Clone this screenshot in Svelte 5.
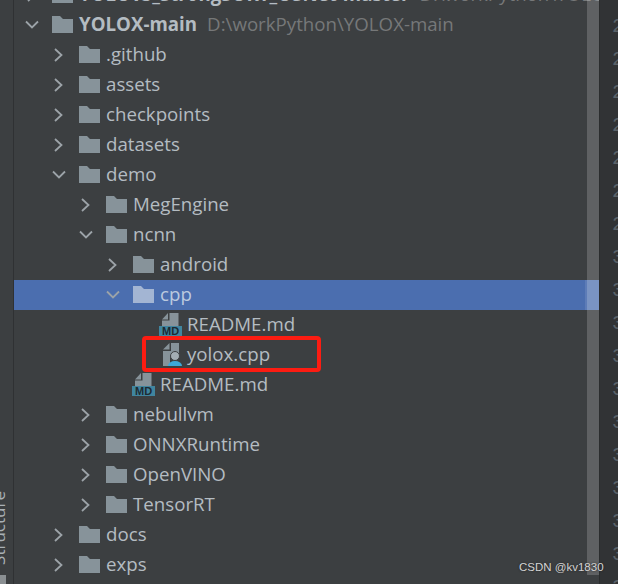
<script lang="ts">
  type Row = { name: string; depth: number; kind: 'closed' | 'open' | 'md' | 'cpp'; path?: string; bold?: boolean; selected?: boolean; boxed?: boolean };

  const rows: Row[] = [
    { name: 'YOLOv5_StrongSORT_OSNet-master', depth: 0, kind: 'closed', path: 'D:\\workPython\\YOLOv5', bold: true },
    { name: 'YOLOX-main', depth: 0, kind: 'open', path: 'D:\\workPython\\YOLOX-main', bold: true },
    { name: '.github', depth: 1, kind: 'closed' },
    { name: 'assets', depth: 1, kind: 'closed' },
    { name: 'checkpoints', depth: 1, kind: 'closed' },
    { name: 'datasets', depth: 1, kind: 'closed' },
    { name: 'demo', depth: 1, kind: 'open' },
    { name: 'MegEngine', depth: 2, kind: 'closed' },
    { name: 'ncnn', depth: 2, kind: 'open' },
    { name: 'android', depth: 3, kind: 'closed' },
    { name: 'cpp', depth: 3, kind: 'open', selected: true },
    { name: 'README.md', depth: 4, kind: 'md' },
    { name: 'yolox.cpp', depth: 4, kind: 'cpp', boxed: true },
    { name: 'README.md', depth: 3, kind: 'md' },
    { name: 'nebullvm', depth: 2, kind: 'closed' },
    { name: 'ONNXRuntime', depth: 2, kind: 'closed' },
    { name: 'OpenVINO', depth: 2, kind: 'closed' },
    { name: 'TensorRT', depth: 2, kind: 'closed' },
    { name: 'docs', depth: 1, kind: 'closed' },
    { name: 'exps', depth: 1, kind: 'closed' }
  ];

  const lineNumbers = Array.from({ length: 18 }, (_, i) => (i < 7 ? '2' : '3'));
</script>

<div class="ide">
  <aside class="rail">
    <span class="rail-label">Structure</span>
    <span class="rail-tab"></span>
  </aside>

  <div class="tree">
    {#each rows as row}
      <div class="row" class:selected={row.selected} style="padding-left: {row.depth * 27}px">
        <span class="arrow">
          {#if row.kind === 'closed'}
            <svg width="12" height="14" viewBox="0 0 12 14"><path d="M3 1l6.500 6-6.500 6" /></svg>
          {:else if row.kind === 'open'}
            <svg width="14" height="10" viewBox="0 0 14 10"><path d="M1 1.500l6 6 6-6" /></svg>
          {/if}
        </span>
        {#if row.kind === 'closed' || row.kind === 'open'}
          <svg class="icon" width="21" height="17" viewBox="0 0 21 17">
            <path class="folder" d="M0 0h8l3 3h10v14H0z" />
          </svg>
        {:else if row.kind === 'md'}
          <svg class="icon file" width="23" height="23" viewBox="0 0 23 23">
            <path class="sheet" d="M9 0v6.500H3z" />
            <path class="sheet" d="M10.500 0h9v13H3V7.500h7.500z" />
            <rect class="md" x="0" y="13" width="23" height="10" />
            <text x="3" y="21.500" class="md-label">MD</text>
          </svg>
        {:else}
          <svg class="icon file cpp" width="20" height="23" viewBox="0 0 20 23">
            <path class="sheet" d="M7.500 0v6.500H1z" />
            <path class="sheet" d="M9 0h8v8H9zM1 8h16v5H1zM1 10h7v13H1z" />
            <circle class="head" cx="13" cy="13" r="4.500" />
            <path class="person" d="M6 23a7 5 0 0 1 14 0z" />
          </svg>
        {/if}
        <span class="name" class:bold={row.bold}>{row.name}</span>
        {#if row.path}<span class="path">{row.path}</span>{/if}
        {#if row.boxed}<span class="box"></span>{/if}
      </div>
    {/each}
  </div>

  <div class="scrollbar"></div>
  <div class="sel-track"></div>

  <div class="gutter">
    {#each lineNumbers as n}
      <span>{n}</span>
    {/each}
  </div>

  <span class="watermark">CSDN @kv1830</span>
</div>

<style>
  :global(body) {
    margin: 0;
    background: #3c3f41;
  }

  .ide {
    position: relative;
    display: flex;
    width: 618px;
    height: 584px;
    overflow: hidden;
    background: #3c3f41;
    font-family: 'Open Sans', 'Noto Sans', sans-serif;
  }

  .rail {
    width: 13px;
    flex: none;
    position: relative;
    overflow: hidden;
    border-right: 1px solid #2f3133;
  }

  .rail-label {
    position: absolute;
    left: -10px;
    bottom: 19px;
    writing-mode: vertical-rl;
    transform: rotate(180deg);
    color: #a9b0b5;
    font-size: 17px;
    line-height: 17px;
  }

  .rail-tab {
    position: absolute;
    left: 0;
    top: 575px;
    width: 6px;
    height: 9px;
    background: #8a8f92;
  }

  .tree {
    flex: 1;
    margin-top: -20px;
    min-width: 0;
  }

  .row {
    position: relative;
    display: flex;
    align-items: center;
    height: 30px;
    white-space: nowrap;
    box-sizing: border-box;
    color: #b4bcc2;
    font-size: 18.700px;
  }

  .row.selected {
    background: #4b6eaf;
    margin-right: -17px;
    color: #bccadf;
  }

  .arrow {
    width: 26px;
    margin-left: 11px;
    flex: none;
    display: flex;
    align-items: center;
  }

  .arrow path {
    fill: none;
    stroke: #9ca3a8;
    stroke-width: 1.800;
  }

  .icon {
    flex: none;
    margin-left: 1px;
    margin-bottom: 1px;
  }

  .icon.file {
    margin-left: 0;
  }

  .icon.cpp {
    margin-left: 3px;
  }

  .folder,
  .sheet {
    fill: #87939a;
  }

  .selected .folder {
    fill: #a3b5d3;
  }

  .md {
    fill: #40859f;
  }

  .md-label {
    fill: #1d2b33;
    font: 700 11px 'Liberation Sans', sans-serif;
  }

  .head {
    fill: #a3adb3;
    stroke: #3c3f41;
    stroke-width: 1;
  }

  .person {
    fill: #3ea8d8;
  }

  .name {
    margin-left: 6px;
    padding-bottom: 4px;
  }

  .file + .name {
    margin-left: 5px;
  }

  .name.bold {
    font-weight: 700;
  }

  .box {
    position: absolute;
    left: 128px;
    top: -4px;
    width: 171px;
    height: 28px;
    border: 4px solid #fc1c12;
    border-radius: 4px;
  }

  .path {
    margin-left: 10px;
    padding-bottom: 4px;
    color: #767879;
  }

  .scrollbar {
    position: absolute;
    left: 587px;
    top: 0;
    width: 12px;
    height: 575px;
    background: rgba(255, 255, 255, 0.18);
  }

  .sel-track {
    position: absolute;
    left: 585px;
    top: 280px;
    width: 15px;
    height: 30px;
    background: rgba(255, 255, 255, 0.1);
  }

  .gutter {
    position: absolute;
    left: 599px;
    top: 0;
    bottom: 0;
    width: 19px;
    background: #313335;
    border-left: 1px solid #2b2d2e;
    color: #5a6269;
    font-family: 'Liberation Mono', monospace;
    font-size: 20px;
    overflow: hidden;
    display: flex;
    flex-direction: column;
    padding: 10px 0 0 12px;
    box-sizing: border-box;
    line-height: 33px;
  }

  .watermark {
    position: absolute;
    left: 519px;
    top: 561px;
    font: 11.500px 'Liberation Sans', sans-serif;
    color: #d4d4d4;
    text-shadow: 0 0 2px #222;
  }
</style>
